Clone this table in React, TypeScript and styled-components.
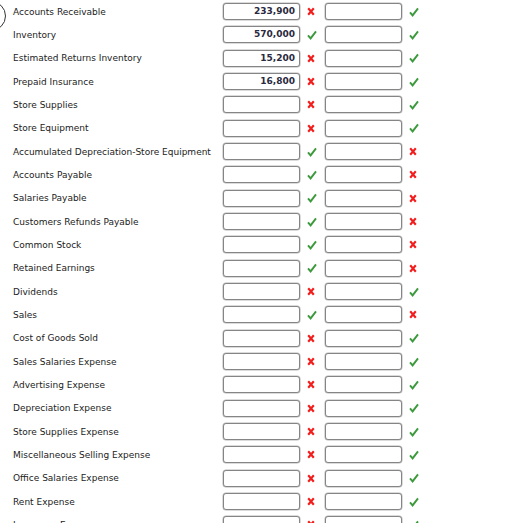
import React from "react";
import styled, { createGlobalStyle } from "styled-components";

const Global = createGlobalStyle`
  html, body { margin: 0; padding: 0; background: #fff; }
  body { font-family: "DejaVu Sans", Verdana, sans-serif; overflow: hidden; }
`;

type Mark = "ok" | "no";
type Row = { label: string; value?: string; m1: Mark; m2: Mark };

const rows: Row[] = [
  { label: "Accounts Receivable", value: "233,900", m1: "no", m2: "ok" },
  { label: "Inventory", value: "570,000", m1: "ok", m2: "ok" },
  { label: "Estimated Returns Inventory", value: "15,200", m1: "no", m2: "ok" },
  { label: "Prepaid Insurance", value: "16,800", m1: "no", m2: "ok" },
  { label: "Store Supplies", m1: "no", m2: "ok" },
  { label: "Store Equipment", m1: "no", m2: "ok" },
  { label: "Accumulated Depreciation-Store Equipment", m1: "ok", m2: "no" },
  { label: "Accounts Payable", m1: "ok", m2: "no" },
  { label: "Salaries Payable", m1: "ok", m2: "no" },
  { label: "Customers Refunds Payable", m1: "ok", m2: "no" },
  { label: "Common Stock", m1: "ok", m2: "no" },
  { label: "Retained Earnings", m1: "ok", m2: "no" },
  { label: "Dividends", m1: "no", m2: "ok" },
  { label: "Sales", m1: "ok", m2: "no" },
  { label: "Cost of Goods Sold", m1: "no", m2: "ok" },
  { label: "Sales Salaries Expense", m1: "no", m2: "ok" },
  { label: "Advertising Expense", m1: "no", m2: "ok" },
  { label: "Depreciation Expense", m1: "no", m2: "ok" },
  { label: "Store Supplies Expense", m1: "no", m2: "ok" },
  { label: "Miscellaneous Selling Expense", m1: "no", m2: "ok" },
  { label: "Office Salaries Expense", m1: "no", m2: "ok" },
  { label: "Rent Expense", m1: "no", m2: "ok" },
  { label: "Insurance Expense", m1: "no", m2: "ok" },
];

const Page = styled.div`
  position: relative;
  padding: 0;
`;

const QuestionCircle = styled.div`
  position: absolute;
  left: -24px;
  top: 1px;
  width: 28px;
  height: 28px;
  border: 1.5px solid #333;
  border-radius: 50%;
`;

const Table = styled.div`
  display: flex;
  flex-direction: column;
`;

const RowBox = styled.div`
  display: grid;
  grid-template-columns: 223px 77px 25px 77px 24px;
  align-items: center;
  height: 23.33px;
`;

const Label = styled.div`
  padding-left: 13px;
  font-size: 9px;
  color: #222;
  white-space: nowrap;
  line-height: 12px;
`;

const Field = styled.div`
  box-sizing: border-box;
  height: 17px;
  border: 1px solid #858585;
  border-radius: 3px;
  box-shadow: 0 0 0 0.5px #b8b8b8;
  background: #fff;
  font-size: 9px;
  font-weight: bold;
  color: #2a2a40;
  text-align: right;
  padding-right: 4px;
  line-height: 15px;
`;

const MarkCell = styled.div`
  display: flex;
  align-items: center;
  padding-left: 7px;
  height: 17px;
`;

const Cross = () => (
  <svg width="8" height="9" viewBox="0 0 8 9">
    <path d="M1.2 1.2 L6.8 7.8 M6.8 1.2 L1.2 7.8" stroke="#f21d1d" strokeWidth="2.1" strokeLinecap="butt" fill="none" />
  </svg>
);

const Check = () => (
  <svg width="10" height="10" viewBox="0 0 10 10">
    <path d="M1 5.4 L3.6 8.4 L9 1.4" stroke="#3c9a3c" strokeWidth="1.9" fill="none" strokeLinejoin="miter" />
  </svg>
);

const MarkIcon = ({ m }: { m: Mark }) => (m === "ok" ? <Check /> : <Cross />);

export default function App() {
  return (
    <Page>
      <Global />
      <QuestionCircle />
      <Table>
        {rows.map((r) => (
          <RowBox key={r.label}>
            <Label>{r.label}</Label>
            <Field>{r.value ?? ""}</Field>
            <MarkCell>
              <MarkIcon m={r.m1} />
            </MarkCell>
            <Field />
            <MarkCell>
              <MarkIcon m={r.m2} />
            </MarkCell>
          </RowBox>
        ))}
      </Table>
    </Page>
  );
}
